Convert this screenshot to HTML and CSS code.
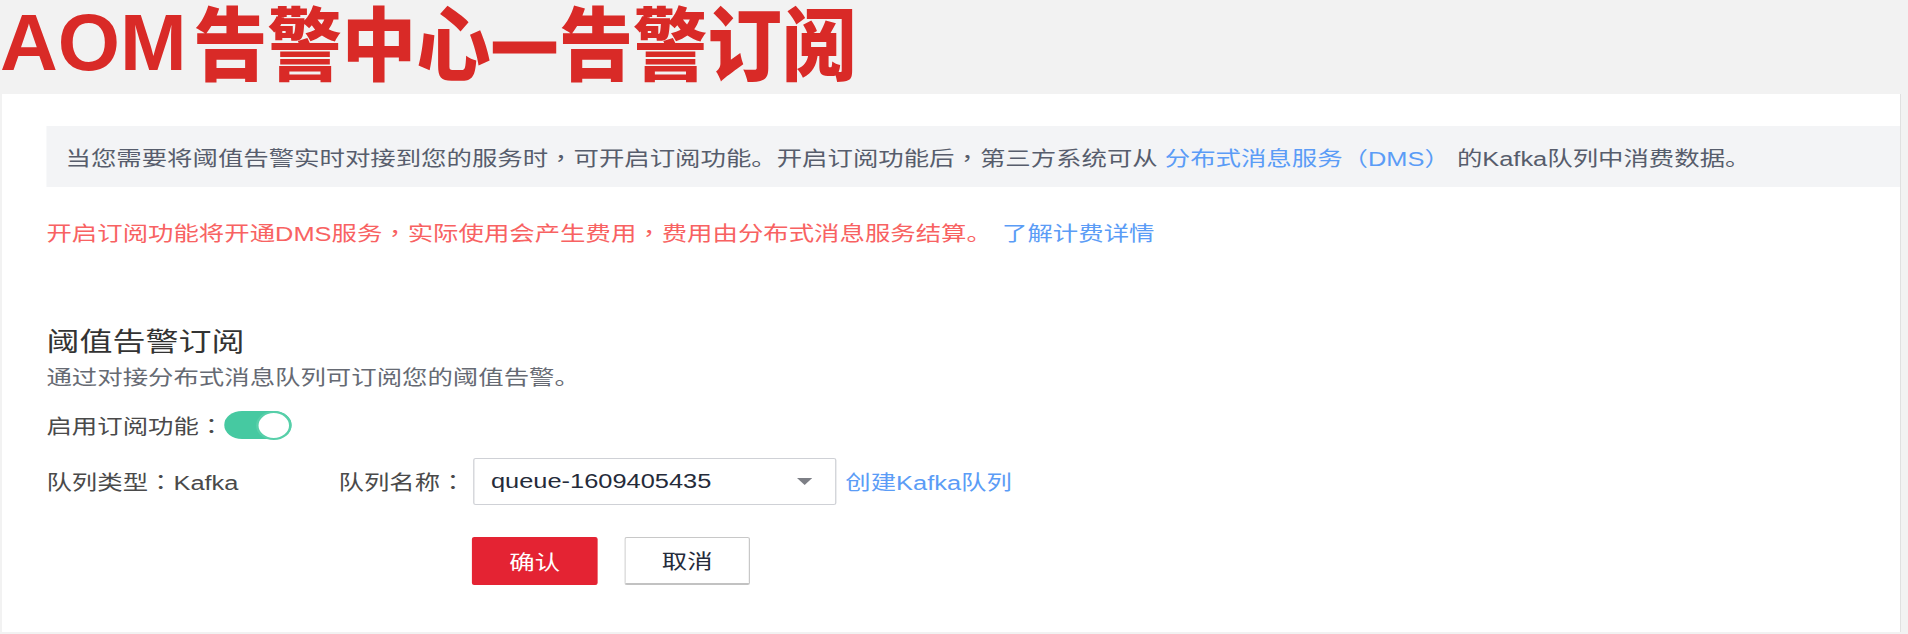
FILE: index.html
```html
<!DOCTYPE html>
<html lang="zh-CN">
<head>
<meta charset="utf-8">
<title>AOM告警中心—告警订阅</title>
<link rel="stylesheet" href="styles.css">
</head>
<body>
<header class="banner">
  <h1 class="banner-title"><span class="latin">AOM</span><span class="cjk">告警中心<span class="dash">—</span>告警订阅</span></h1>
</header>
<main class="card">
  <div class="content">
    <div class="notice">当您需要将阈值告警实时对接到您的服务时<span class="p" lang="zh-TW">，</span>可开启订阅功能。开启订阅功能后<span class="p" lang="zh-TW">，</span>第三方系统可从 <a class="link">分布式消息服务<span class="p" lang="zh-TW">（</span>DMS<span class="p" lang="zh-TW">）</span></a> 的Kafka队列中消费数据。</div>
    <p class="warn">开启订阅功能将开通DMS服务<span class="p" lang="zh-TW">，</span>实际使用会产生费用<span class="p" lang="zh-TW">，</span>费用由分布式消息服务结算。<a class="link warn-link">了解计费详情</a></p>
    <h2 class="section-title">阈值告警订阅</h2>
    <p class="section-desc">通过对接分布式消息队列可订阅您的阈值告警。</p>
    <div class="switch-row">
      <span class="label">启用订阅功能<span class="p" lang="zh-TW">：</span></span>
      <span class="switch"><span class="knob"></span></span>
    </div>
    <div class="queue-row">
      <span class="label type-label">队列类型<span class="p" lang="zh-TW">：</span>Kafka</span>
      <span class="label">队列名称<span class="p" lang="zh-TW">：</span></span>
      <div class="select">
        <span class="select-value">queue-1609405435</span>
        <svg class="caret" width="12" height="8" viewBox="0 0 12 8"><path d="M0 0 L12 0 L6 7 Z" fill="#7d7f86"/></svg>
      </div>
      <a class="link create-link">创建Kafka队列</a>
    </div>
    <div class="actions">
      <button class="btn btn-primary">确认</button>
      <button class="btn btn-default">取消</button>
    </div>
  </div>
</main>
</body>
</html>
```
FILE: styles.css
```css
html, body {
  margin: 0;
  padding: 0;
  background: #f2f2f2;
  height: 634px;
  overflow: hidden;
}
body {
  font-family: "Liberation Sans", "Noto Sans CJK SC", sans-serif;
  color: #333;
}
.p {
  font-family: "Noto Sans CJK TC", "Noto Sans CJK SC", sans-serif;
}
.banner {
  display: flow-root;
  height: 94px;
}
.banner-title {
  margin: -19px 0 0;
  font-size: 80px;
  line-height: normal;
  font-weight: bold;
  color: #d92a27;
  white-space: nowrap;
}
.banner-title .latin {
  font-family: "Liberation Sans", sans-serif;
}
.banner-title .cjk {
  display: inline-block;
  font-family: "Noto Sans CJK SC", sans-serif;
  font-size: 80px;
  line-height: normal;
  font-weight: 900;
  margin-left: 6px;
  transform: scaleX(0.93);
  transform-origin: 0 0;
  vertical-align: -4px;
}
.banner-title .dash {
  -webkit-text-stroke: 3px #d92a27;
  display: inline-block;
  transform: translateY(-3px);
}
.card {
  background: #fff;
  margin: 0 7px 0 2px;
  height: 538px;
  overflow: hidden;
  border-right: 1px solid #e0e0e0;
}
.content {
  width: 1496px;
  box-sizing: border-box;
  padding: 32px 0 0 35px;
  transform: scaleX(1.27);
  transform-origin: 0 0;
  font-size: 20px;
}
.link {
  color: #5b9cf6;
  cursor: pointer;
}
.notice {
  background: #f3f4f6;
  height: 61px;
  line-height: 63px;
  padding-left: 15px;
  color: #575d6c;
  white-space: nowrap;
}
.warn {
  margin: 31px 0 0;
  line-height: 30px;
  color: #f86262;
  white-space: nowrap;
}
.warn-link {
  margin-left: 8px;
}
.section-title {
  margin: 76px 0 0;
  font-size: 26px;
  line-height: 34px;
  font-weight: normal;
  color: #333;
}
.section-desc {
  margin: 5px 0 0;
  line-height: 28px;
  color: #666a73;
}
.switch-row {
  margin-top: 18px;
  display: flex;
  align-items: center;
  height: 30px;
}
.label {
  color: #4a4a4a;
  white-space: nowrap;
}
.switch {
  width: 53px;
  height: 28px;
  border-radius: 15px;
  background: #46c9a1;
  display: flex;
  justify-content: flex-end;
  align-items: center;
  box-sizing: border-box;
}
.knob {
  width: 28px;
  height: 29px;
  border-radius: 50%;
  background: #fff;
  border: 2px solid #57cfa9;
  box-sizing: border-box;
}
.queue-row {
  margin-top: 18px;
  display: flex;
  align-items: center;
  height: 47px;
}
.type-label {
  width: 230px;
}
.select {
  margin-left: 6px;
  width: 286px;
  height: 47px;
  box-sizing: border-box;
  border: 1px solid #cfd1d6;
  border-radius: 2px;
  display: flex;
  align-items: center;
  justify-content: space-between;
  padding: 0 18px 0 13px;
  color: #252b3a;
}
.create-link {
  margin-left: 7px;
}
.actions {
  margin: 32px 0 0 335px;
  display: flex;
  gap: 21px;
}
.btn {
  width: 99px;
  height: 48px;
  border-radius: 2px;
  font-family: "Liberation Sans", "Noto Sans CJK SC", sans-serif;
  font-size: 20px;
  cursor: pointer;
  box-sizing: border-box;
}
.btn-primary {
  background: #e42333;
  color: #fff;
  border: 1px solid #e42333;
}
.btn-default {
  background: #fff;
  color: #252b3a;
  border: 1px solid #c8c8c8;
  border-bottom: 2px solid #c2c2c2;
}
```
